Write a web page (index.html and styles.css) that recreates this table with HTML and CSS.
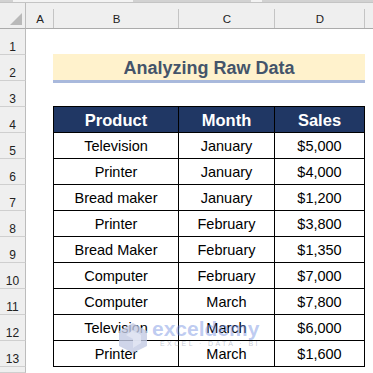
FILE: index.html
```html
<!DOCTYPE html>
<html>
<head>
<meta charset="utf-8">
<link rel="stylesheet" href="styles.css">
</head>
<body>
<div class="topbar"><span class="tab"></span><span class="tab2"></span></div>
<div class="sheet">
  <div class="corner"><svg width="12" height="12" viewBox="0 0 12 12"><polygon points="12,0 12,12 0,12" fill="#b9b9b9"/></svg></div>
  <div class="ch">A</div>
  <div class="ch">B</div>
  <div class="ch">C</div>
  <div class="ch">D</div>
  <div class="ch last"></div>

  <div class="rh">1</div><div class="blank span"></div>
  <div class="rh">2</div><div class="blank"></div><div class="title">Analyzing Raw Data</div><div class="blank"></div>
  <div class="rh">3</div><div class="blank span"></div>
  <div class="rh">4</div><div class="blank"></div>
  <div class="data">
    <div class="hd">Product</div><div class="hd">Month</div><div class="hd">Sales</div>
    <div class="c">Television</div><div class="c">January</div><div class="c">$5,000</div>
    <div class="c">Printer</div><div class="c">January</div><div class="c">$4,000</div>
    <div class="c">Bread maker</div><div class="c">January</div><div class="c">$1,200</div>
    <div class="c">Printer</div><div class="c">February</div><div class="c">$3,800</div>
    <div class="c">Bread Maker</div><div class="c">February</div><div class="c">$1,350</div>
    <div class="c">Computer</div><div class="c">February</div><div class="c">$7,000</div>
    <div class="c">Computer</div><div class="c">March</div><div class="c">$7,800</div>
    <div class="c">Television</div><div class="c">March</div><div class="c">$6,000</div>
    <div class="c">Printer</div><div class="c">March</div><div class="c">$1,600</div>
  </div>
  <div class="rh">5</div>
  <div class="rh">6</div>
  <div class="rh">7</div>
  <div class="rh">8</div>
  <div class="rh">9</div>
  <div class="rh">10</div>
  <div class="rh">11</div>
  <div class="rh">12</div>
  <div class="rh">13</div>
  <div class="rh"></div>
</div>
<div class="watermark">
  <svg class="wm-logo" width="32" height="32" viewBox="0 0 32 32">
    <polygon points="16,1 30,9 30,24 16,31 2,24 2,9" fill="#c3cbe4" opacity="0.8"/>
    <polygon points="16,8 24,13 24,21 16,26 16,17 9,13" fill="#e1e6f3" opacity="0.9"/>
  </svg>
  <div class="wm-text">
    <div class="wm-name">exceldemy</div>
    <div class="wm-sub">EXCEL · DATA · BI</div>
  </div>
</div>
</body>
</html>
```
FILE: styles.css
```css
* { box-sizing: border-box; }
html, body { margin: 0; padding: 0; background: #fff; }
body {
  width: 373px;
  height: 373px;
  overflow: hidden;
  position: relative;
  font-family: "Liberation Sans", Arial, sans-serif;
}
.topbar {
  height: 3px;
  background: #d2d2d2;
  border-bottom: 1px solid #c4c4c4;
  display: flex;
}
.topbar .tab {
  margin-left: 13px;
  width: 120px;
  height: 2px;
  background: #f3f3f3;
}
.topbar .tab2 {
  margin-left: 118px;
  width: 11px;
  height: 2px;
  background: #f3f3f3;
}
.sheet {
  display: grid;
  grid-template-columns: 26px 28px 125px 96px 90px 8px;
  grid-template-rows: 26px repeat(13, 26px) 6px;
}
.corner {
  background: #efefef;
  border-right: 1px solid #bcbcbc;
  border-bottom: 1px solid #ababab;
  display: flex;
  align-items: flex-end;
  justify-content: flex-end;
  padding: 0 3px 3px 0;
}
.corner svg { display: block; }
.ch {
  background: linear-gradient(#c4c4c4, #c4c4c4) right bottom / 1px 19px no-repeat, #efefef;
  border-bottom: 1px solid #ababab;
  display: flex;
  align-items: center;
  justify-content: center;
  padding-top: 6px;
  font-size: 11.5px;
  color: #222;
}
.ch.last { background: #efefef; }
.rh {
  grid-column: 1;
  background: #efefef;
  border-right: 1px solid #bcbcbc;
  border-bottom: 1px solid #cfcfcf;
  display: flex;
  align-items: flex-end;
  justify-content: center;
  padding-bottom: 1px;
  font-size: 12px;
  line-height: 12px;
  color: #222;
  overflow: hidden;
}
.blank { background: transparent; }
.blank.span { grid-column: 2 / 7; }
.title {
  grid-column: 3 / 6;
  margin: -1px 0 -2px -1px;
  background: #fff2cc;
  border-bottom: 3px solid #a9b9dc;
  color: #44546a;
  font-weight: bold;
  font-size: 18px;
  display: flex;
  align-items: center;
  justify-content: center;
  padding-top: 2px;
}
.data {
  grid-column: 3 / 6;
  grid-row: 5 / 15;
  margin: -1px 0 0 -1px;
  border-left: 1px solid #000;
  border-top: 1px solid #000;
  display: grid;
  grid-template-columns: 125px 96px 90px;
  grid-auto-rows: 26px;
}
.data > div {
  border-right: 1px solid #000;
  border-bottom: 1px solid #000;
  display: flex;
  align-items: center;
  justify-content: center;
}
.hd {
  background: #203764;
  color: #fff;
  font-weight: bold;
  font-size: 16.5px;
  padding-top: 1px;
}
.c {
  color: #000;
  font-size: 14.5px;
  padding-top: 1px;
}
.watermark {
  position: absolute;
  left: 117px;
  top: 316px;
  display: flex;
  align-items: flex-start;
  gap: 3px;
  pointer-events: none;
}
.wm-logo { margin-top: 6px; }
.wm-text { display: flex; flex-direction: column; }
.wm-name {
  font-family: "Liberation Sans", Arial, sans-serif;
  font-weight: bold;
  font-size: 21px;
  line-height: 26px;
  color: rgba(110, 140, 225, 0.45);
}
.wm-sub {
  font-size: 7px;
  letter-spacing: 2.4px;
  color: rgba(110, 120, 150, 0.4);
  margin-top: -2px;
  margin-left: 8px;
}
```
